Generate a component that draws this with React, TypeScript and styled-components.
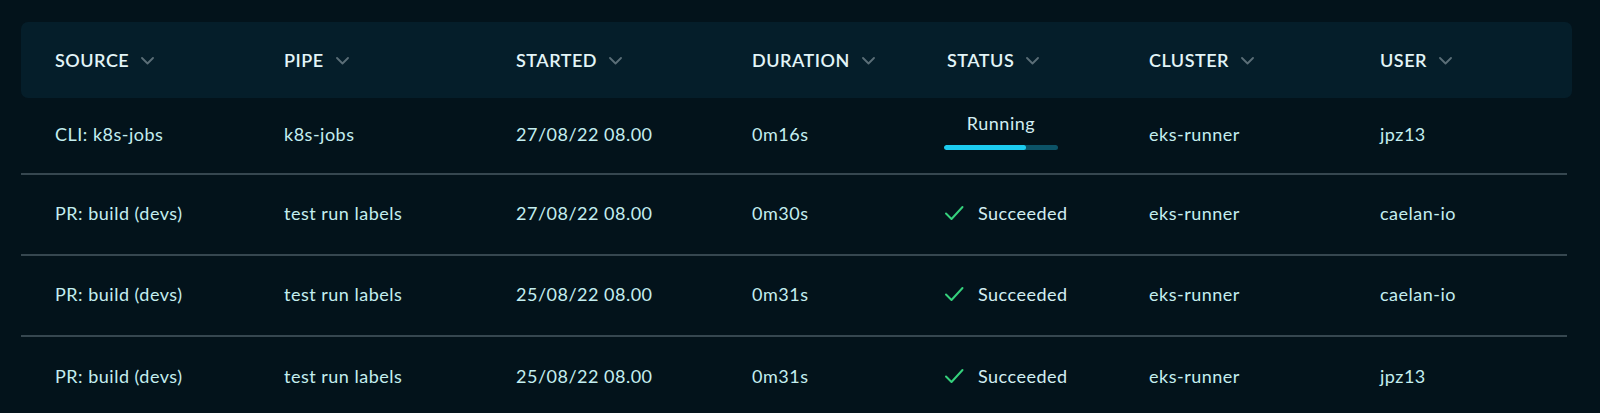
import styled, { createGlobalStyle } from "styled-components";

const GlobalStyle = createGlobalStyle`
  html, body {
    margin: 0;
    padding: 0;
    background: #03131b;
  }
`;

const COLUMNS = "229px 232px 236px 195px 202px 231px 1fr";

const Page = styled.div`
  background: #03131b;
  padding: 22px 28px 0 21px;
  height: 413px;
  box-sizing: border-box;
  overflow: hidden;
  font-family: Lato, "Noto Sans", sans-serif;
`;

const HeaderRow = styled.div`
  display: grid;
  grid-template-columns: ${COLUMNS};
  align-items: center;
  height: 76px;
  padding-left: 34px;
  background: #051e2a;
  border-radius: 7px;
`;

const HeaderCell = styled.div`
  display: flex;
  align-items: center;
  gap: 12px;
  color: #e3f5f8;
  font-size: 18px;
  font-weight: 600;
  letter-spacing: 0.5px;
`;

const Chevron = styled.svg`
  width: 13px;
  height: 8px;
  margin-top: 1px;
`;

const Row = styled.div<{ $height: number }>`
  display: grid;
  grid-template-columns: ${COLUMNS};
  align-items: center;
  box-sizing: border-box;
  height: ${(p) => p.$height}px;
  padding-left: 34px;
  padding-bottom: 3px;
  margin-right: 5px;
  border-bottom: 2px solid #364750;
  &:last-child {
    border-bottom: none;
  }
`;

const Cell = styled.div`
  color: #c4eef0;
  font-size: 18px;
  letter-spacing: 0.5px;
  white-space: nowrap;
`;

const RunningBox = styled.div`
  display: flex;
  flex-direction: column;
  align-items: center;
  width: 114px;
  margin-left: -3px;
  margin-top: -6px;
  gap: 11px;
  color: #d3eef2;
`;

const Track = styled.div`
  width: 100%;
  height: 5px;
  border-radius: 3px;
  background: #0c5367;
  overflow: hidden;
`;

const Fill = styled.div`
  height: 100%;
  border-radius: 3px;
  background: #1ccbef;
`;

const StatusLine = styled.div`
  display: flex;
  align-items: center;
  gap: 14px;
  margin-left: -3px;
  color: #d3eef2;
`;

const CheckIcon = styled.svg`
  width: 20px;
  height: 16px;
`;

const headers = ["SOURCE", "PIPE", "STARTED", "DURATION", "STATUS", "CLUSTER", "USER"];

type Job = {
  source: string;
  pipe: string;
  started: string;
  duration: string;
  status: "running" | "succeeded";
  progress?: number;
  cluster: string;
  user: string;
};

const jobs: Job[] = [
  { source: "CLI: k8s-jobs", pipe: "k8s-jobs", started: "27/08/22 08.00", duration: "0m16s", status: "running", progress: 72, cluster: "eks-runner", user: "jpz13" },
  { source: "PR: build (devs)", pipe: "test run labels", started: "27/08/22 08.00", duration: "0m30s", status: "succeeded", cluster: "eks-runner", user: "caelan-io" },
  { source: "PR: build (devs)", pipe: "test run labels", started: "25/08/22 08.00", duration: "0m31s", status: "succeeded", cluster: "eks-runner", user: "caelan-io" },
  { source: "PR: build (devs)", pipe: "test run labels", started: "25/08/22 08.00", duration: "0m31s", status: "succeeded", cluster: "eks-runner", user: "jpz13" },
];

function Status({ job }: { job: Job }) {
  if (job.status === "running") {
    return (
      <RunningBox>
        <span>Running</span>
        <Track>
          <Fill style={{ width: `${job.progress}%` }} />
        </Track>
      </RunningBox>
    );
  }
  return (
    <StatusLine>
      <CheckIcon viewBox="0 0 20 16">
        <path d="M2 8.5 L7.5 14 L18.5 2" fill="none" stroke="#35d17c" strokeWidth="2" strokeLinecap="round" strokeLinejoin="round" />
      </CheckIcon>
      <span>Succeeded</span>
    </StatusLine>
  );
}

export default function App() {
  return (
    <Page>
      <GlobalStyle />
      <HeaderRow>
        {headers.map((h) => (
          <HeaderCell key={h}>
            {h}
            <Chevron viewBox="0 0 13 8">
              <path d="M1 1 L6.5 6.5 L12 1" fill="none" stroke="#5b6e77" strokeWidth="1.8" strokeLinecap="round" strokeLinejoin="round" />
            </Chevron>
          </HeaderCell>
        ))}
      </HeaderRow>
      {jobs.map((job, i) => (
        <Row key={i} $height={i === 0 ? 77 : 81}>
          <Cell>{job.source}</Cell>
          <Cell>{job.pipe}</Cell>
          <Cell>{job.started}</Cell>
          <Cell>{job.duration}</Cell>
          <Cell>
            <Status job={job} />
          </Cell>
          <Cell>{job.cluster}</Cell>
          <Cell>{job.user}</Cell>
        </Row>
      ))}
    </Page>
  );
}
